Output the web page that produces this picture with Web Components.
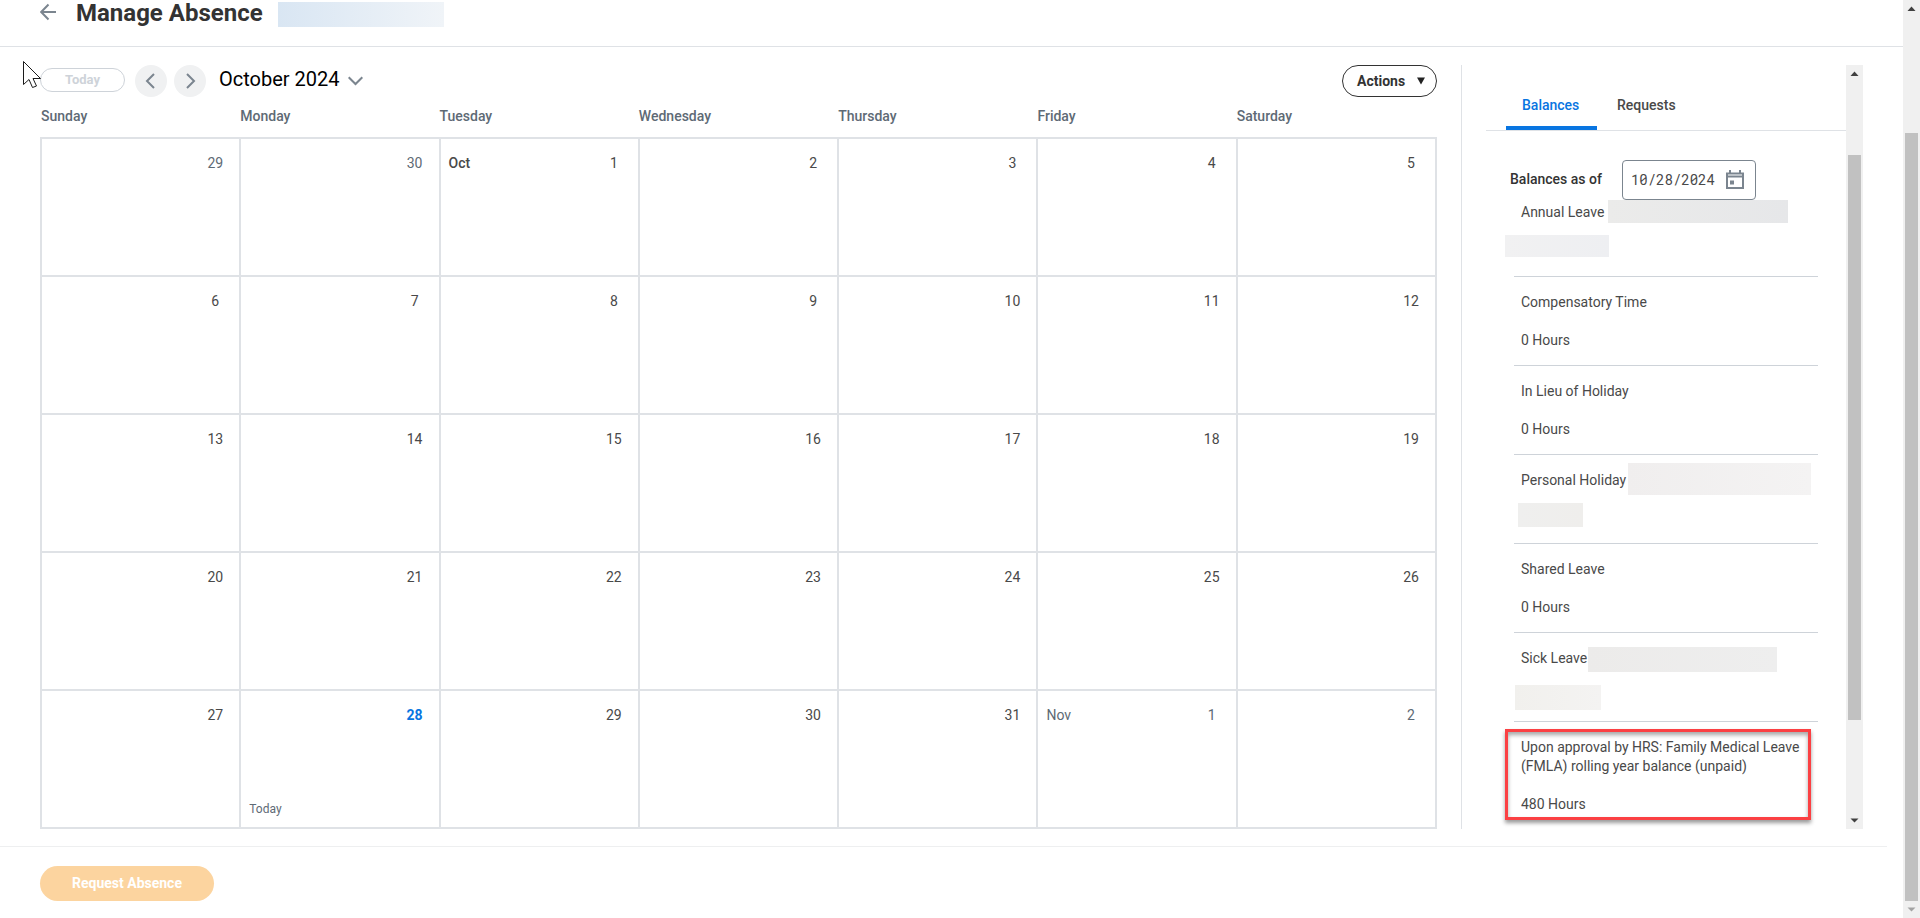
<!DOCTYPE html>
<html lang="en">
<head>
<meta charset="utf-8">
<meta name="viewport" content="width=device-width, initial-scale=1">
<title>Manage Absence</title>
<style>
      body {
            margin: 0;
            background: #fff;
            color: #494949;
            font-family: Roboto, "Liberation Sans", sans-serif;
            font-size: 14px;
            line-height: 19px;
      }
</style>
</head>
<body>
<absence-page></absence-page>

<script>
class HiddenPatch extends HTMLElement {
      constructor() {
            super();
            this._shadowRoot = this.attachShadow({ mode: "open" });
      }
      connectedCallback() {
            this._shadowRoot.innerHTML = `
                  <style>
                        :host {
                              display: block;
                              background-image: linear-gradient(90deg, var(--from, #ebebea), var(--to, #ebebed));
                        }
                  </style>
            `;
      }
}
customElements.define('hidden-patch', HiddenPatch)

class ScrollRail extends HTMLElement {
      constructor() {
            super();
            this._shadowRoot = this.attachShadow({ mode: "open" });
      }
      connectedCallback() {
            // before / size / after are the shares of the track round the thumb
            const before = this.getAttribute('before');
            const size = this.getAttribute('size');
            const after = this.getAttribute('after');
            this._shadowRoot.innerHTML = `
                  <style>
                        :host {
                              display: flex;
                              flex-direction: column;
                              width: 17px;
                              background: #f0f0f0;
                        }
                        svg { flex: none; display: block; }
                        .track { flex: 1; display: flex; flex-direction: column; padding: 0 2px; }
                        .before { flex: ${before}; }
                        .thumb { flex: ${size}; background: #c1c1c1; }
                        .after { flex: ${after}; }
                  </style>
                  <svg width="17" height="17" viewBox="0 0 17 17"><path d="M8.500 6.500 L12.500 11 H4.500 Z" fill="#404040"/></svg>
                  <div class="track">
                        <div class="before"></div>
                        <div class="thumb"></div>
                        <div class="after"></div>
                  </div>
                  <svg width="17" height="17" viewBox="0 0 17 17"><path d="M8.500 10.500 L12.500 6.500 H4.500 Z" fill="${after === '0' ? '#a3a3a3' : '#404040'}"/></svg>
            `;
      }
}
customElements.define('scroll-rail', ScrollRail)

class PageHeader extends HTMLElement {
      constructor() {
            super();
            this._shadowRoot = this.attachShadow({ mode: "open" });
      }
      connectedCallback() {
            this._shadowRoot.innerHTML = `
                  <style>
                        :host {
                              display: flex;
                              align-items: flex-end;
                              height: 27px;
                              padding: 0 40px 19px;
                              border-bottom: 1px solid #dfe2e6;
                        }
                        button { width: 16px; height: 28px; padding: 0; border: 0; background: none; margin-right: 20px; }
                        svg { display: block; }
                        h1 { margin: 0; font-size: 24px; line-height: 28px; font-weight: 700; color: #333; }
                        hidden-patch { width: 166px; height: 25px; margin-left: 15px; --from: #d9e6f3; --to: #f0f4f8; }
                  </style>
                  <button aria-label="Back">
                        <svg width="16" height="24" viewBox="0 0 16 24" fill="none" stroke="#7b858f" stroke-width="2"><path d="M16 11H1.500M8.500 3.500L1.200 11L8.500 18.500"/></svg>
                  </button>
                  <h1><slot></slot></h1>
                  <hidden-patch></hidden-patch>
            `;
      }
}
customElements.define('page-header', PageHeader)

class CalendarToolbar extends HTMLElement {
      constructor() {
            super();
            this._shadowRoot = this.attachShadow({ mode: "open" });
      }
      connectedCallback() {
            this._shadowRoot.innerHTML = `
                  <style>
                        :host { display: flex; align-items: center; height: 32px; }
                        button { font: inherit; padding: 0; border: 0; background: none; }
                        svg { display: block; }
                        .today {
                              width: 85px;
                              height: 24px;
                              margin-right: 10px;
                              margin-bottom: 2px;
                              border: 1px solid #ced3d9;
                              border-radius: 12px;
                              font-size: 13px;
                              line-height: 20px;
                              font-weight: 700;
                              color: #ced3d9;
                        }
                        .step {
                              display: grid;
                              place-items: center;
                              width: 32px;
                              height: 32px;
                              margin-right: 7px;
                              border-radius: 50%;
                              background: #f0f1f2;
                        }
                        .month {
                              display: flex;
                              align-items: center;
                              gap: 8px;
                              margin-left: 6px;
                              margin-bottom: 4px;
                              font-size: 20px;
                              line-height: 28px;
                              color: #000;
                        }
                        .month svg { margin-top: 4px; }
                        .actions {
                              display: flex;
                              align-items: center;
                              justify-content: space-between;
                              box-sizing: border-box;
                              width: 95px;
                              height: 32px;
                              margin-left: auto;
                              padding: 0 11px 0 14px;
                              border: 1px solid #333;
                              border-radius: 16px;
                              font-weight: 700;
                              color: #333;
                        }
                  </style>
                  <button class="today" disabled>Today</button>
                  <button class="step" aria-label="Previous month">
                        <svg width="16" height="16" viewBox="0 0 16 16" fill="none" stroke="#7b858f" stroke-width="2"><path d="M11 1L4 8L11 15"/></svg>
                  </button>
                  <button class="step" aria-label="Next month">
                        <svg width="16" height="16" viewBox="0 0 16 16" fill="none" stroke="#7b858f" stroke-width="2"><path d="M5 1L12 8L5 15"/></svg>
                  </button>
                  <button class="month"><slot></slot>
                        <svg width="15" height="10" viewBox="0 0 15 10" fill="none" stroke="#7b858f" stroke-width="2"><path d="M0.700 1.200L7.500 8L14.300 1.200"/></svg>
                  </button>
                  <button class="actions">Actions
                        <svg width="8" height="8" viewBox="0 0 8 8"><path d="M0 0.500H8L4 7.500Z" fill="#222"/></svg>
                  </button>
            `;
      }
}
customElements.define('calendar-toolbar', CalendarToolbar)

class MonthCalendar extends HTMLElement {
      constructor() {
            super();
            this._shadowRoot = this.attachShadow({ mode: "open" });
      }
      connectedCallback() {
            const names = ['Sunday', 'Monday', 'Tuesday', 'Wednesday', 'Thursday', 'Friday', 'Saturday'];
            const first = new Date(2024, 8, 29);
            let rows = '';
            for (let week = 0; week < 5; week++) {
                  rows += '<tr>';
                  for (let day = 0; day < 7; day++) {
                        rows += this.cell(new Date(2024, first.getMonth(), first.getDate() + week * 7 + day));
                  }
                  rows += '</tr>';
            }
            this._shadowRoot.innerHTML = `
                  <style>
                        :host { display: block; }
                        table { width: 100%; border-collapse: collapse; table-layout: fixed; }
                        th {
                              box-sizing: border-box;
                              height: 41px;
                              padding: 0 0 2px;
                              text-align: left;
                              font-weight: 500;
                              color: #5e6a75;
                        }
                        td { padding: 0; border: 2px solid #dfe2e6; }
                        .day {
                              display: flex;
                              flex-direction: column;
                              justify-content: space-between;
                              box-sizing: border-box;
                              height: 136px;
                              padding: 14px 16px 8px 8px;
                              line-height: 20px;
                        }
                        .top { display: flex; }
                        .number { min-width: 16px; margin-left: auto; text-align: center; }
                        .month { font-weight: 500; }
                        .outside, .outside .month { color: #5e6a75; font-weight: 400; }
                        .current .number { color: #0875e1; font-weight: 700; }
                        .note { font-size: 12px; color: #5e6a75; }
                  </style>
                  <table>
                        <thead><tr>${names.map(name => `<th scope="col">${name}</th>`).join('')}</tr></thead>
                        <tbody>${rows}</tbody>
                  </table>
            `;
      }

      cell(date) {
            const outside = date.getMonth() !== 9;
            const current = !outside && date.getDate() === 28;
            const month = date.getDate() === 1 ? `<span class="month">${outside ? 'Nov' : 'Oct'}</span>` : '';
            return `
                  <td>
                        <div class="day ${outside ? 'outside' : ''} ${current ? 'current' : ''}">
                              <div class="top">${month}<span class="number">${date.getDate()}</span></div>
                              ${current ? '<span class="note">Today</span>' : ''}
                        </div>
                  </td>
            `;
      }
}
customElements.define('month-calendar', MonthCalendar)

class BalanceItem extends HTMLElement {
      constructor() {
            super();
            this._shadowRoot = this.attachShadow({ mode: "open" });
      }
      connectedCallback() {
            this._shadowRoot.innerHTML = `
                  <style>
                        :host {
                              display: block;
                              position: relative;
                              padding: 16px 7px 15px;
                              border-bottom: 1px solid #ced3d9;
                        }
                        :host(:first-of-type) { padding: 3px 7px 16px; }
                        :host([marked]) { border-bottom: 0; }
                        p { margin: 0; }
                        .amount { min-height: 19px; margin-top: 19px; }
                        :host([marked])::after {
                              content: "";
                              position: absolute;
                              inset: 7px 7px 9px -9px;
                              border: 3px solid #fb4043;
                              box-shadow: 0 3px 4px rgba(0, 0, 0, 0.4), inset 0 3px 4px rgba(0, 0, 0, 0.35);
                        }
                        /* patches lie over the employee's private details */
                        ::slotted(hidden-patch) {
                              position: absolute;
                              left: var(--x);
                              top: var(--y);
                              width: var(--w);
                              height: var(--h);
                        }
                  </style>
                  <p>${this.getAttribute('name')}</p>
                  <p class="amount">${this.getAttribute('amount') || ''}</p>
                  <slot></slot>
            `;
      }
}
customElements.define('balance-item', BalanceItem)

class BalancePanel extends HTMLElement {
      constructor() {
            super();
            this._shadowRoot = this.attachShadow({ mode: "open" });
      }
      connectedCallback() {
            this._shadowRoot.innerHTML = `
                  <style>
                        :host { display: flex; border-left: 1px solid #dfe2e6; }
                        .content { flex: 1; padding-left: 24px; }
                        .tabs {
                              display: flex;
                              height: 65px;
                              padding-left: 20px;
                              border-bottom: 1px solid #dfe2e6;
                        }
                        .tabs button {
                              box-sizing: border-box;
                              min-width: 91px;
                              padding: 16px 16px 0;
                              margin-right: 4px;
                              border: 0;
                              background: none;
                              font: inherit;
                              font-weight: 500;
                              color: #494949;
                              text-align: left;
                        }
                        .tabs button[aria-selected="true"] {
                              color: #0875e1;
                              background: linear-gradient(#0875e1, #0875e1) bottom / 100% 4px no-repeat;
                              border-radius: 4px 4px 0 0;
                        }
                        .as-of {
                              display: flex;
                              align-items: center;
                              gap: 20px;
                              padding: 29px 0 0 24px;
                        }
                        label { padding-bottom: 2px; font-weight: 500; color: #333; }
                        .date {
                              display: flex;
                              align-items: center;
                              box-sizing: border-box;
                              width: 134px;
                              height: 40px;
                              padding: 0 11px 0 8px;
                              border: 1px solid #7b858f;
                              border-radius: 4px;
                        }
                        input {
                              flex: 1;
                              min-width: 0;
                              padding: 0;
                              border: 0;
                              outline: 0;
                              background: none;
                              font: 14px/20px "Roboto Mono", "Liberation Mono", monospace;
                              color: #494949;
                        }
                        .date button { padding: 0; border: 0; background: none; }
                        .date svg { display: block; }
                        .list { margin: 0 28px; }
                  </style>
                  <div class="content">
                        <div class="tabs" role="tablist">
                              <button role="tab" aria-selected="true">Balances</button>
                              <button role="tab" aria-selected="false">Requests</button>
                        </div>
                        <div class="as-of">
                              <label for="as-of">Balances as of</label>
                              <div class="date">
                                    <input id="as-of" type="text" value="10/28/2024">
                                    <button aria-label="Open calendar">
                                          <svg width="18" height="20" viewBox="0 0 18 20" fill="none" stroke="#7b858f" stroke-width="2"><path d="M1 3.500H17V18H1ZM4 0V3M14 0V3"/><path d="M1 6.500H17"/><path d="M4 10.500H8V14.500H4Z" fill="#7b858f" stroke="none"/></svg>
                                    </button>
                              </div>
                        </div>
                        <div class="list"><slot></slot></div>
                  </div>
                  <scroll-rail before="73" size="565" after="92"></scroll-rail>
            `;
      }
}
customElements.define('balance-panel', BalancePanel)

class AbsencePage extends HTMLElement {
      constructor() {
            super();
            this._shadowRoot = this.attachShadow({ mode: "open" });
      }
      connectedCallback() {
            this._shadowRoot.innerHTML = `
                  <style>
                        :host {
                              display: grid;
                              grid-template-columns: minmax(0, 1fr) 17px;
                              min-height: 100vh;
                        }
                        main { display: flex; gap: 24px; padding: 18px 40px 17px; }
                        .calendar { flex: 1; min-width: 0; }
                        balance-panel { flex: none; width: 401px; }
                        footer {
                              margin-right: 16px;
                              padding: 19px 40px 17px;
                              border-top: 1px solid #eeeff0;
                        }
                        .request {
                              display: block;
                              height: 35px;
                              padding: 0 32px;
                              border: 0;
                              border-radius: 18px;
                              background: #fcd49f;
                              font: inherit;
                              font-weight: 700;
                              color: #fff;
                        }
                        .pointer { position: absolute; left: 22px; top: 60px; }
                        [data-key="annual"] { --x: 94px; --y: 0px; --w: 180px; --h: 23px; --from: #ebebea; --to: #e6e7e9; }
                        [data-key="annual-amount"] { --x: -9px; --y: 35px; --w: 104px; --h: 22px; --from: #f1f1f2; --to: #eeeff2; }
                        [data-key="personal"] { --x: 114px; --y: 8px; --w: 183px; --h: 32px; --from: #f0eeee; --to: #f4f3f3; }
                        [data-key="personal-amount"] { --x: 4px; --y: 48px; --w: 65px; --h: 24px; --from: #efefee; --to: #efeeec; }
                        [data-key="sick"] { --x: 74px; --y: 14px; --w: 189px; --h: 25px; --from: #ecebea; --to: #eeeeee; }
                        [data-key="sick-amount"] { --x: 1px; --y: 52px; --w: 86px; --h: 25px; --from: #f1f0ed; --to: #f4f3f2; }
                  </style>
                  <div>
                        <page-header>Manage Absence</page-header>
                        <main>
                              <div class="calendar">
                                    <calendar-toolbar>October 2024</calendar-toolbar>
                                    <month-calendar></month-calendar>
                              </div>
                              <balance-panel>
                                    <balance-item name="Annual Leave">
                                          <hidden-patch data-key="annual"></hidden-patch>
                                          <hidden-patch data-key="annual-amount"></hidden-patch>
                                    </balance-item>
                                    <balance-item name="Compensatory Time" amount="0 Hours"></balance-item>
                                    <balance-item name="In Lieu of Holiday" amount="0 Hours"></balance-item>
                                    <balance-item name="Personal Holiday">
                                          <hidden-patch data-key="personal"></hidden-patch>
                                          <hidden-patch data-key="personal-amount"></hidden-patch>
                                    </balance-item>
                                    <balance-item name="Shared Leave" amount="0 Hours"></balance-item>
                                    <balance-item name="Sick Leave">
                                          <hidden-patch data-key="sick"></hidden-patch>
                                          <hidden-patch data-key="sick-amount"></hidden-patch>
                                    </balance-item>
                                    <balance-item marked name="Upon approval by HRS: Family Medical Leave (FMLA) rolling year balance (unpaid)" amount="480 Hours"></balance-item>
                              </balance-panel>
                        </main>
                        <footer><button class="request" disabled>Request Absence</button></footer>
                  </div>
                  <scroll-rail before="116" size="769" after="0"></scroll-rail>
                  <svg class="pointer" width="20" height="29" viewBox="0 0 20 29"><path d="M1.500 1.500V24.500L7 19.500L10.500 27.500L14.500 26L11 18.500H18.500Z" fill="#fff" stroke="#1b1b1b" stroke-width="1"/></svg>
            `;
      }
}
customElements.define('absence-page', AbsencePage)
</script>
</body>
</html>
